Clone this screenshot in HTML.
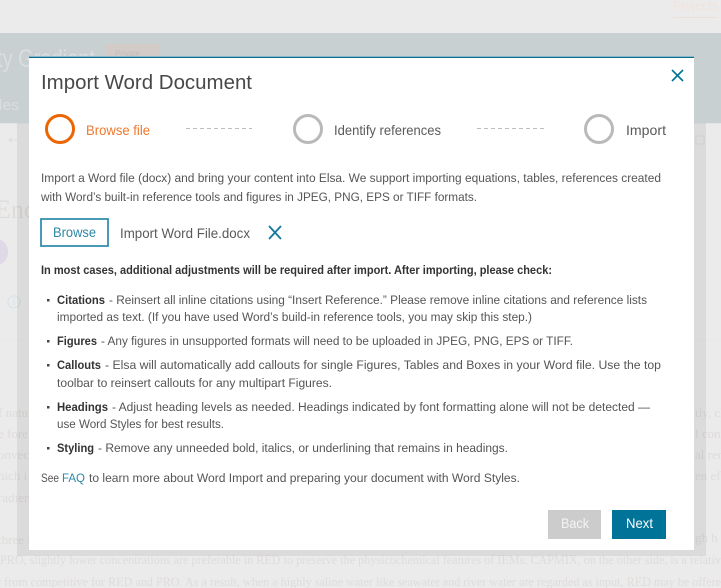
<!DOCTYPE html>
<html lang="en">
<head>
<meta charset="utf-8">
<title>Import Word Document</title>
<style>
html,body{margin:0;padding:0;background:#ebebeb;width:721px;height:588px;overflow:hidden}
svg{display:block;position:absolute;left:0;top:0;filter:blur(.3px)}
text{font-family:"Liberation Sans",sans-serif;font-size:12.2px;fill:#555}
.b{font-weight:bold;fill:#333;font-size:11.8px}
.s{font-family:"Liberation Serif",serif;font-size:13px;fill:#dfdcda}
</style>
</head>
<body>
<svg width="721" height="588" viewBox="0 0 721 588" xmlns="http://www.w3.org/2000/svg">
<!-- backdrop -->
<rect width="721" height="588" fill="#ebebeb"/>
<rect x="0" y="33" width="721" height="90" fill="#c8d0d2"/>
<rect x="0" y="123" width="721" height="1" fill="#e2e4e5"/>
<text x="673" y="10" style="font-size:13px;fill:#f0e4dc" textLength="45" lengthAdjust="spacingAndGlyphs">Projects</text>
<rect x="673" y="17" width="45" height="1" fill="#eee0d6"/>
<text x="-3" y="67" style="font-size:25px;fill:#d9dfe0" textLength="98" lengthAdjust="spacingAndGlyphs">ty Gradient</text>
<rect x="106" y="44" width="54" height="14" fill="#d3cbc7"/>
<text x="115" y="56" style="font-size:8px;fill:#c6bcb7">Private</text>
<text x="-1" y="110" style="font-size:15px;fill:#d9dfe0" textLength="20" lengthAdjust="spacingAndGlyphs">les</text>
<path d="M9 140h8M9 140l3-2.500M9 140l3 2.500" stroke="#dcdcdc" fill="none"/>
<rect x="696" y="136" width="8" height="8" fill="none" stroke="#dedede"/>
<text x="-5" y="218" class="s" style="font-size:26px;fill:#dedbd9">Enc</text>
<circle cx="-6" cy="252" r="14" fill="#dfd8e6"/>
<circle cx="14" cy="302" r="6" fill="none" stroke="#d3e2e8" stroke-width="1"/>
<rect x="13.500" y="300" width="1" height="5" fill="#d3e2e8"/>
<rect x="13.500" y="298" width="1" height="1" fill="#d3e2e8"/>
<rect x="0" y="340" width="721" height="1" fill="#e8e8e8"/>
<text x="-2" y="417" class="s">f natur</text>
<text x="-2" y="438" class="s">e foref</text>
<text x="-2" y="459" class="s">onvec</text>
<text x="-2" y="480" class="s">hich i</text>
<text x="-2" y="502" class="s">radien</text>
<text x="-2" y="544" class="s">three l</text>
<text x="695" y="417" class="s">tly, cl</text>
<text x="695" y="438" class="s">l cont</text>
<text x="695" y="459" class="s">al ren</text>
<text x="695" y="480" class="s">en ef</text>
<text x="695" y="542" class="s">gh h</text>
<text x="0" y="564" class="s" textLength="721" lengthAdjust="spacingAndGlyphs">PRO, slightly lower concentrations are preferable in RED to preserve the physicochemical features of IEMs. CAPMIX, on the other side, is a relativ</text>
<text x="-3" y="586" class="s" textLength="724" lengthAdjust="spacingAndGlyphs">r from competitive for RED and PRO. As a result, when a highly saline water like seawater and river water are regarded as input, RED may be offere</text>
<!-- modal band -->
<rect x="17" y="123" width="689" height="433" fill="#000" opacity=".065"/>
<!-- modal -->
<rect x="29" y="56" width="665" height="494" fill="#fff"/>
<rect x="29" y="56.500" width="665" height="1.500" fill="#0d6f92"/>
<text x="41" y="89" style="font-size:20px;fill:#484848" textLength="211" lengthAdjust="spacingAndGlyphs">Import Word Document</text>
<path d="M672 70l11 11M683 70l-11 11" stroke="#007398" stroke-width="1.600" fill="none"/>
<!-- stepper -->
<circle cx="60" cy="129" r="13.500" fill="none" stroke="#ec6500" stroke-width="3"/>
<text x="86" y="135" style="font-size:14px;fill:#f0782c" textLength="64" lengthAdjust="spacingAndGlyphs">Browse file</text>
<path d="M186 128.500h66" stroke="#bdbdbd" stroke-dasharray="4 3" fill="none"/>
<circle cx="308" cy="129" r="13.500" fill="none" stroke="#b9b9b9" stroke-width="3"/>
<text x="334" y="135" style="font-size:14px;fill:#5a5a5a" textLength="107" lengthAdjust="spacingAndGlyphs">Identify references</text>
<path d="M477 128.500h67" stroke="#bdbdbd" stroke-dasharray="4 3" fill="none"/>
<circle cx="599" cy="129" r="13.500" fill="none" stroke="#b9b9b9" stroke-width="3"/>
<text x="626" y="135" style="font-size:14px;fill:#5a5a5a" textLength="40" lengthAdjust="spacingAndGlyphs">Import</text>
<!-- intro -->
<text x="41" y="182" textLength="620" lengthAdjust="spacingAndGlyphs">Import a Word file (docx) and bring your content into Elsa. We support importing equations, tables, references created</text>
<text x="41" y="201" textLength="436" lengthAdjust="spacingAndGlyphs">with Word’s built-in reference tools and figures in JPEG, PNG, EPS or TIFF formats.</text>
<!-- browse -->
<rect x="41" y="219" width="67" height="27" fill="#fff" stroke="#2a89a8" stroke-width="1.700"/>
<text x="53" y="237" style="font-size:14px;fill:#2d87a6" textLength="43" lengthAdjust="spacingAndGlyphs">Browse</text>
<text x="120" y="238" style="font-size:14px;fill:#5a5a5a" textLength="130" lengthAdjust="spacingAndGlyphs">Import Word File.docx</text>
<path d="M269 226l12 13M281 226l-12 13" stroke="#0f7a9c" stroke-width="1.800" fill="none"/>
<!-- bold -->
<text x="41" y="274" class="b" textLength="511" lengthAdjust="spacingAndGlyphs">In most cases, additional adjustments will be required after import. After importing, please check:</text>
<!-- bullets -->
<rect x="47" y="299" width="2.500" height="2.500" fill="#444"/>
<text x="57" y="304" class="b" textLength="48" lengthAdjust="spacingAndGlyphs">Citations</text>
<text x="109" y="304" textLength="538" lengthAdjust="spacingAndGlyphs">- Reinsert all inline citations using “Insert Reference.” Please remove inline citations and reference lists</text>
<text x="57" y="321" textLength="475" lengthAdjust="spacingAndGlyphs">imported as text. (If you have used Word’s build-in reference tools, you may skip this step.)</text>
<rect x="47" y="340" width="2.500" height="2.500" fill="#444"/>
<text x="57" y="345" class="b" textLength="40" lengthAdjust="spacingAndGlyphs">Figures</text>
<text x="101" y="345" textLength="472" lengthAdjust="spacingAndGlyphs">- Any figures in unsupported formats will need to be uploaded in JPEG, PNG, EPS or TIFF.</text>
<rect x="47" y="364" width="2.500" height="2.500" fill="#444"/>
<text x="57" y="369" class="b" textLength="44" lengthAdjust="spacingAndGlyphs">Callouts</text>
<text x="105" y="369" textLength="556" lengthAdjust="spacingAndGlyphs">- Elsa will automatically add callouts for single Figures, Tables and Boxes in your Word file. Use the top</text>
<text x="57" y="387" textLength="275" lengthAdjust="spacingAndGlyphs">toolbar to reinsert callouts for any multipart Figures.</text>
<rect x="47" y="406" width="2.500" height="2.500" fill="#444"/>
<text x="57" y="411" class="b" textLength="51" lengthAdjust="spacingAndGlyphs">Headings</text>
<text x="112" y="411" textLength="538" lengthAdjust="spacingAndGlyphs">- Adjust heading levels as needed. Headings indicated by font formatting alone will not be detected —</text>
<text x="57" y="428" textLength="167" lengthAdjust="spacingAndGlyphs">use Word Styles for best results.</text>
<rect x="47" y="447" width="2.500" height="2.500" fill="#444"/>
<text x="57" y="452" class="b" textLength="37" lengthAdjust="spacingAndGlyphs">Styling</text>
<text x="98" y="452" textLength="410" lengthAdjust="spacingAndGlyphs">- Remove any unneeded bold, italics, or underlining that remains in headings.</text>
<!-- see faq -->
<text x="41" y="482" textLength="18" lengthAdjust="spacingAndGlyphs">See</text>
<text x="62" y="482" style="fill:#2d87a6" textLength="23" lengthAdjust="spacingAndGlyphs">FAQ</text>
<text x="89" y="482" textLength="431" lengthAdjust="spacingAndGlyphs">to learn more about Word Import and preparing your document with Word Styles.</text>
<!-- buttons -->
<rect x="548" y="510" width="53" height="29" fill="#cccccc"/>
<text x="561" y="528" style="font-size:14px;fill:#f4f4f4" textLength="28" lengthAdjust="spacingAndGlyphs">Back</text>
<rect x="612" y="510" width="54" height="29" fill="#007398"/>
<text x="626" y="528" style="font-size:14px;fill:#fff" textLength="27" lengthAdjust="spacingAndGlyphs">Next</text>
</svg>
</body>
</html>
